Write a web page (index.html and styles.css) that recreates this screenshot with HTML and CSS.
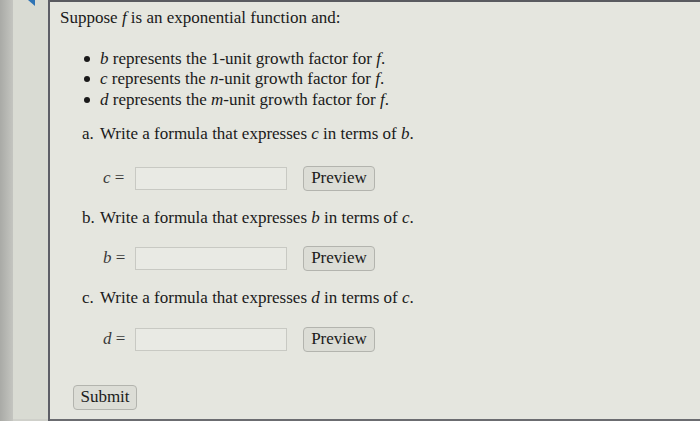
FILE: index.html
```html
<!DOCTYPE html>
<html>
<head>
<meta charset="utf-8">
<link rel="stylesheet" href="styles.css">
</head>
<body>
<div class="screen">
  <div class="strip-dark"></div>
  <div class="strip-light"><span class="corner"></span></div>
  <div class="divider"></div>
  <div class="panel">
    <p class="intro">Suppose <i class="m">f</i> is an exponential function and:</p>
    <ul class="facts">
      <li><span class="dot"></span><span><i class="m">b</i> represents the 1-unit growth factor for <i class="m">f</i>.</span></li>
      <li><span class="dot"></span><span><i class="m">c</i> represents the <i class="m">n</i>-unit growth factor for <i class="m">f</i>.</span></li>
      <li><span class="dot"></span><span><i class="m">d</i> represents the <i class="m">m</i>-unit growth factor for <i class="m">f</i>.</span></li>
    </ul>

    <div class="part">
      <div class="q"><span class="lbl">a.</span><span>Write a formula that expresses <i class="m">c</i> in terms of <i class="m">b</i>.</span></div>
      <div class="answer">
        <span class="var"><i class="m">c</i> =</span>
        <span class="input"></span>
        <span class="btn">Preview</span>
      </div>
    </div>

    <div class="part">
      <div class="q"><span class="lbl">b.</span><span>Write a formula that expresses <i class="m">b</i> in terms of <i class="m">c</i>.</span></div>
      <div class="answer">
        <span class="var"><i class="m">b</i> =</span>
        <span class="input"></span>
        <span class="btn">Preview</span>
      </div>
    </div>

    <div class="part">
      <div class="q"><span class="lbl">c.</span><span>Write a formula that expresses <i class="m">d</i> in terms of <i class="m">c</i>.</span></div>
      <div class="answer">
        <span class="var"><i class="m">d</i> =</span>
        <span class="input"></span>
        <span class="btn">Preview</span>
      </div>
    </div>

    <div class="submit-row"><span class="btn submit">Submit</span></div>
  </div>
</div>
</body>
</html>
```
FILE: styles.css
```css
html, body {
  margin: 0;
  padding: 0;
  width: 700px;
  height: 421px;
  overflow: hidden;
  background: #e4e5de;
}
.screen {
  display: flex;
  width: 700px;
  height: 421px;
  font-family: "Liberation Serif", "Times New Roman", serif;
  color: #1a1a1a;
}
.strip-dark {
  width: 13px;
  background: linear-gradient(to right, #a9aaa6, #c4c5c0);
}
.strip-light {
  width: 35px;
  background: #d9dbd3;
  position: relative;
  border-bottom: 2px solid #cfd0ca;
  box-sizing: border-box;
}
.corner {
  position: absolute;
  left: 15px;
  top: 0;
  width: 0;
  height: 0;
  border-top: 6px solid #2f74b5;
  border-left: 7px solid transparent;
}
.divider {
  width: 2px;
  background: #5d5e66;
}
.panel {
  flex: 1;
  border-top: 2px solid #5a5b60;
  border-bottom: 2px solid #6b6c70;
  padding: 6px 0 0 10px;
  background: #e5e6df;
  font-size: 17px;
  line-height: 20.5px;
}
.m {
  font-style: italic;
}
.intro {
  margin: 0;
}
.facts {
  list-style: none;
  margin: 20px 0 0 0;
  padding: 0 0 0 24px;
}
.facts li {
  display: flex;
  align-items: center;
}
.dot {
  width: 6px;
  height: 6px;
  border-radius: 50%;
  background: #1a1a1a;
  margin-right: 10px;
  flex: none;
}
.part {
  margin-top: 14px;
}
.part + .part {
  margin-top: 17px;
}
.q {
  display: flex;
  padding-left: 22px;
}
.lbl {
  width: 18px;
}
.answer {
  display: flex;
  align-items: center;
  margin-top: 18px;
  padding-left: 43px;
  height: 25px;
}
.part:first-of-type .answer {
  margin-top: 21px;
}
.var {
  width: 32px;
  color: #3a3a3a;
}
.input {
  width: 150px;
  height: 21px;
  border: 1px solid #c8c9c3;
  background: #e9eae4;
  margin-right: 16px;
}
.btn {
  display: inline-flex;
  align-items: center;
  justify-content: center;
  height: 23px;
  padding: 0 8px;
  width: 54px;
  border: 1px solid #b3b4ae;
  border-radius: 4px;
  background: #dcddd6;
  color: #1a1a1a;
}
.submit-row {
  margin-top: 33px;
  padding-left: 13px;
}
.submit {
  width: 46px;
}
```
